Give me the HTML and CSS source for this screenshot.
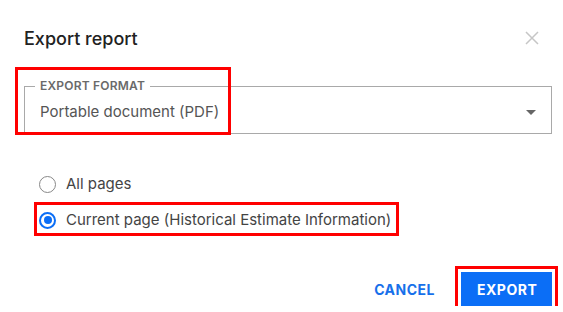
FILE: index.html
```html
<!DOCTYPE html>
<html lang="en">
<head>
    <meta charset="UTF-8">
    <meta name="viewport" content="width=device-width, initial-scale=1.0">
    <title>Export report</title>
    <link rel="stylesheet" href="styles.css">
</head>
<body>
    <div class="dialog">
        <div class="dialog-header">
            <h2 class="dialog-title">Export report</h2>
            <button class="close-button" aria-label="Close">
                <svg width="14" height="14" viewBox="0 0 14 14">
                    <path d="M1 1L13 13M13 1L1 13" stroke="#c6c6c6" stroke-width="1.5" fill="none"/>
                </svg>
            </button>
        </div>

        <div class="field">
            <fieldset class="select">
                <legend>Export format</legend>
                <div class="select-value">
                    <span>Portable document (PDF)</span>
                    <span class="caret"></span>
                </div>
            </fieldset>
            <div class="highlight highlight-format"></div>
        </div>

        <div class="radio-group">
            <label class="radio">
                <span class="radio-circle"></span>
                <span>All pages</span>
            </label>
            <label class="radio checked highlighted">
                <span class="radio-circle"></span>
                <span>Current page (Historical Estimate Information)</span>
            </label>
        </div>

        <div class="dialog-actions">
            <button class="text-button">Cancel</button>
            <button class="primary-button highlighted">Export</button>
        </div>
    </div>
</body>
</html>
```

FILE: styles.css
```css
body {
    margin: 0;
    font-family: Inter, "Noto Sans", sans-serif;
    background: #fff;
}

.dialog {
    padding: 27px 11px 0 24px;
}

.dialog-header {
    display: flex;
    justify-content: space-between;
    align-items: center;
    height: 24px;
}

.dialog-title {
    margin: 0;
    font-size: 18px;
    font-weight: 500;
    line-height: 24px;
    color: #222;
}

.close-button {
    border: none;
    background: none;
    padding: 0;
    margin-right: 13px;
    margin-top: -3px;
    width: 14px;
    height: 14px;
    display: flex;
    cursor: pointer;
}

.field {
    position: relative;
    margin-top: 29px;
}

.select {
    margin: 0;
    padding: 10px 15px 11px 10px;
    border: 1px solid #a9a9a9;
}

.select legend {
    padding: 0 5px;
    font-size: 12px;
    line-height: 12px;
    font-weight: 600;
    letter-spacing: 0.2px;
    text-transform: uppercase;
    color: #6a6a6a;
}

.select-value {
    display: flex;
    justify-content: space-between;
    align-items: center;
    padding-left: 5px;
    font-size: 15px;
    line-height: 20px;
    color: #555;
}

.caret {
    width: 0;
    height: 0;
    border-left: 5px solid transparent;
    border-right: 5px solid transparent;
    border-top: 5px solid #666;
}

.highlight {
    position: absolute;
    border: 3px solid #f00;
    box-sizing: border-box;
}

.highlight-format {
    left: -9px;
    top: -13px;
    width: 216px;
    height: 68px;
}

.radio-group {
    display: flex;
    flex-direction: column;
    align-items: flex-start;
    gap: 12px;
    margin-top: 37px;
    padding-left: 15px;
}

.radio {
    display: flex;
    align-items: center;
    gap: 10px;
    height: 24px;
    padding-right: 3px;
    font-size: 15px;
    color: #444;
    cursor: pointer;
}

.radio-circle {
    width: 17px;
    height: 17px;
    box-sizing: border-box;
    border: 1px solid #888;
    border-radius: 50%;
    margin-top: 2px;
    display: flex;
    align-items: center;
    justify-content: center;
}

.radio.checked .radio-circle {
    border: 2px solid #0b6ef6;
}

.radio.checked .radio-circle::after {
    content: "";
    width: 8px;
    height: 8px;
    border-radius: 50%;
    background: #0b6ef6;
}

.highlighted {
    outline: 3px solid #f00;
    outline-offset: 2px;
}

.dialog-actions {
    display: flex;
    justify-content: flex-end;
    align-items: center;
    gap: 10px;
    margin-top: 41px;
}

.text-button, .primary-button {
    font-family: Inter, "Noto Sans", sans-serif;
    font-size: 14px;
    font-weight: 700;
    letter-spacing: 0.5px;
    text-transform: uppercase;
    height: 34px;
    padding: 0 16px;
    border: none;
    cursor: pointer;
}

.text-button {
    background: none;
    color: #1770ea;
}

.primary-button {
    width: 91px;
    background: #0b6ef6;
    color: #fff;
}

.primary-button.highlighted {
    outline-offset: 3px;
}
```
